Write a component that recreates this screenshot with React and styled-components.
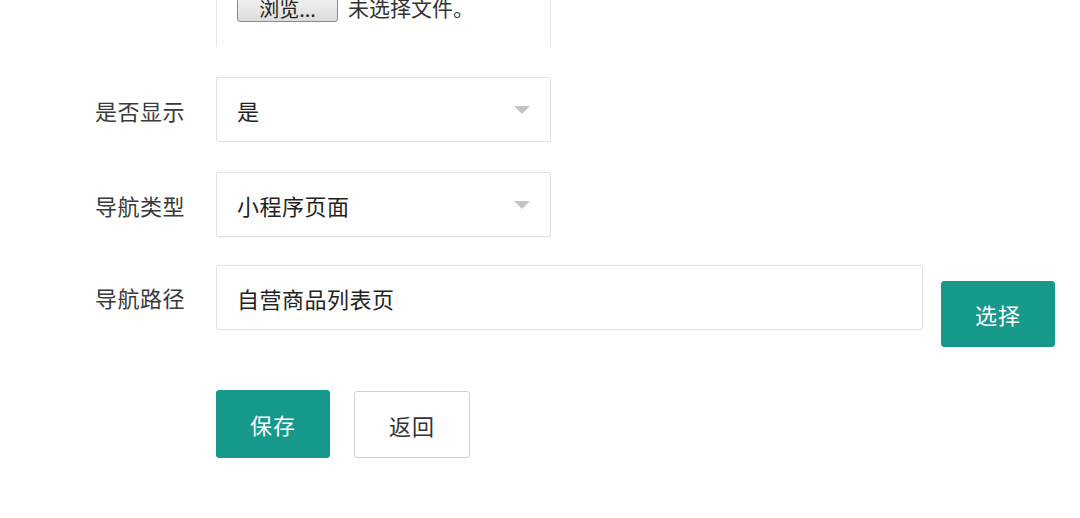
import React from "react";
import styled, { createGlobalStyle } from "styled-components";

const GlobalStyle = createGlobalStyle`
  html, body {
    margin: 0;
    padding: 0;
    background: #fff;
    overflow: hidden;
  }
  body {
    font-family: "Microsoft YaHei", "Noto Sans CJK SC", "Liberation Sans", sans-serif;
    color: #333;
  }
`;

const Form = styled.div`
  width: 1080px;
  height: 518px;
  padding-left: 95px;
  box-sizing: border-box;
  display: flex;
  flex-direction: column;
`;

const Row = styled.div`
  display: flex;
  align-items: ${(p) => (p.$top ? "flex-start" : "center")};
  margin-top: ${(p) => p.$gap || 0}px;
`;

const Label = styled.div`
  width: 121px;
  flex-shrink: 0;
  margin-top: ${(p) => p.$mt || 0}px;
  font-size: 22px;
  color: #3a3a3a;
  letter-spacing: 0.5px;
`;

// cropped upload area at the top
const UploadBox = styled.div`
  width: 335px;
  height: 47px;
  box-sizing: border-box;
  border: 1px solid #e6e6e6;
  border-top: none;
  border-bottom: none;
  padding-left: 20px;
  display: flex;
  align-items: flex-start;
  gap: 10px;
`;

const BrowseButton = styled.button`
  margin-top: -5px;
  width: 101px;
  height: 27px;
  font-family: inherit;
  font-size: 20px;
  line-height: 1;
  color: #222;
  border: 1px solid #8a8a8a;
  border-radius: 3px;
  background: linear-gradient(#f4f4f4, #dcdcdc);
  padding: 0;
`;

const FileText = styled.span`
  margin-top: -8px;
  font-size: 21px;
  color: #333;
`;

const Field = styled.div`
  width: ${(p) => p.$width}px;
  height: 65px;
  box-sizing: border-box;
  border: 1px solid #e2e2e2;
  border-radius: 2px;
  padding: 0 20px;
  display: flex;
  align-items: center;
  justify-content: space-between;
  font-size: 22px;
  letter-spacing: 0.5px;
  color: #222;
  box-shadow: 0 1px 1px rgba(0, 0, 0, 0.03);
`;

const Caret = styled.span`
  width: 0;
  height: 0;
  border-left: 8px solid transparent;
  border-right: 8px solid transparent;
  border-top: 8px solid #c4c4c4;
`;

const Button = styled.button`
  width: ${(p) => p.$width || 114}px;
  height: ${(p) => p.$height || 67}px;
  margin-left: ${(p) => p.$ml || 0}px;
  margin-top: ${(p) => p.$mt || 0}px;
  box-sizing: border-box;
  border-radius: 3px;
  font-family: inherit;
  font-size: 22px;
  letter-spacing: 1px;
  padding: 0;
  cursor: pointer;
  border: 1px solid ${(p) => (p.$primary ? "#16998a" : "#d0d0d0")};
  background: ${(p) => (p.$primary ? "#16998a" : "#fff")};
  color: ${(p) => (p.$primary ? "#fff" : "#333")};
`;

const Actions = styled.div`
  display: flex;
  align-items: flex-start;
  gap: 24px;
  margin-top: 43px;
  margin-left: 121px;
`;

export default function App() {
  return (
    <>
      <GlobalStyle />
      <Form>
        <Row $top>
          <Label />
          <UploadBox>
            <BrowseButton>浏览...</BrowseButton>
            <FileText>未选择文件。</FileText>
          </UploadBox>
        </Row>

        <Row $gap={30}>
          <Label>是否显示</Label>
          <Field $width={335}>
            是
            <Caret />
          </Field>
        </Row>

        <Row $gap={30}>
          <Label>导航类型</Label>
          <Field $width={335}>
            小程序页面
            <Caret />
          </Field>
        </Row>

        <Row $gap={28} $top>
          <Label $mt={16}>导航路径</Label>
          <Field $width={707}>自营商品列表页</Field>
          <Button $primary $ml={18} $mt={16} $height={66}>
            选择
          </Button>
        </Row>

        <Actions>
          <Button $primary $height={68}>保存</Button>
          <Button $width={116} $height={67} $mt={1}>返回</Button>
        </Actions>
      </Form>
    </>
  );
}
